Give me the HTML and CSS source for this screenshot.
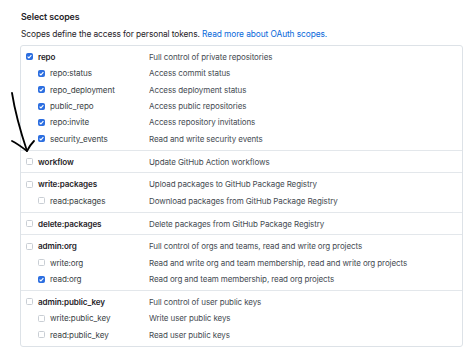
FILE: index.html
```html
<!DOCTYPE html>
<html lang="en">
<head>
    <meta charset="UTF-8">
    <meta name="viewport" content="width=device-width, initial-scale=1.0">
    <title>Select scopes</title>
    <link rel="stylesheet" href="styles.css">
</head>
<body>
    <div class="page">
        <h3 class="title">Select scopes</h3>
        <p class="hint">Scopes define the access for personal tokens. <a href="#">Read more about OAuth scopes.</a></p>
        <div class="scopes">
            <div class="group">
                <div class="row"><span class="box checked"></span><span class="name main">repo</span><span class="desc">Full control of private repositories</span></div>
                <div class="row sub"><span class="box checked"></span><span class="name">repo:status</span><span class="desc">Access commit status</span></div>
                <div class="row sub"><span class="box checked"></span><span class="name">repo_deployment</span><span class="desc">Access deployment status</span></div>
                <div class="row sub"><span class="box checked"></span><span class="name">public_repo</span><span class="desc">Access public repositories</span></div>
                <div class="row sub"><span class="box checked"></span><span class="name">repo:invite</span><span class="desc">Access repository invitations</span></div>
                <div class="row sub"><span class="box checked"></span><span class="name">security_events</span><span class="desc">Read and write security events</span></div>
            </div>
            <div class="group">
                <div class="row"><span class="box"></span><span class="name main">workflow</span><span class="desc">Update GitHub Action workflows</span></div>
            </div>
            <div class="group">
                <div class="row"><span class="box"></span><span class="name main">write:packages</span><span class="desc">Upload packages to GitHub Package Registry</span></div>
                <div class="row sub"><span class="box"></span><span class="name">read:packages</span><span class="desc">Download packages from GitHub Package Registry</span></div>
            </div>
            <div class="group">
                <div class="row"><span class="box"></span><span class="name main">delete:packages</span><span class="desc">Delete packages from GitHub Package Registry</span></div>
            </div>
            <div class="group">
                <div class="row"><span class="box"></span><span class="name main">admin:org</span><span class="desc">Full control of orgs and teams, read and write org projects</span></div>
                <div class="row sub"><span class="box"></span><span class="name">write:org</span><span class="desc">Read and write org and team membership, read and write org projects</span></div>
                <div class="row sub"><span class="box checked"></span><span class="name">read:org</span><span class="desc">Read org and team membership, read org projects</span></div>
            </div>
            <div class="group">
                <div class="row"><span class="box"></span><span class="name main">admin:public_key</span><span class="desc">Full control of user public keys</span></div>
                <div class="row sub"><span class="box"></span><span class="name">write:public_key</span><span class="desc">Write user public keys</span></div>
                <div class="row sub"><span class="box"></span><span class="name">read:public_key</span><span class="desc">Read user public keys</span></div>
            </div>
        </div>
        <svg class="arrow" width="474" height="349" viewBox="0 0 474 349">
            <path d="M12 93 C15 112 21 133 27 151" fill="none" stroke="#000" stroke-width="1.8" stroke-linecap="round"/>
            <path d="M12 141 C18 144 23 148 27 151 C29 147 31 144 34 141" fill="none" stroke="#000" stroke-width="1.8" stroke-linecap="round" stroke-linejoin="round"/>
        </svg>
    </div>
</body>
</html>
```
FILE: styles.css
```css
body {
    margin: 0;
    padding: 0;
    background-color: white;
    font-family: 'Inter', 'Liberation Sans', sans-serif;
    color: #1f2328;
}
.page {
    position: relative;
    width: 474px;
    height: 349px;
    padding: 11px 0 0 21px;
    box-sizing: border-box;
}
.title {
    margin: 0;
    font-size: 8.8px;
    font-weight: 600;
    line-height: 12px;
    letter-spacing: -0.1px;
}
.hint {
    margin: 5px 0 0;
    font-size: 8.4px;
    line-height: 12px;
    letter-spacing: -0.1px;
    color: #1f2328;
}
.hint a {
    color: #0969da;
    text-decoration: none;
}
.scopes {
    margin: 5px 0 0 -1px;
    width: 441px;
    border: 1px solid #dde2e7;
    border-radius: 3px;
}
.group {
    padding: 2.7px 0;
    border-top: 1px solid #e3e7eb;
}
.group:first-child {
    border-top: none;
}
.row {
    display: flex;
    align-items: center;
    height: 16.4px;
    padding-left: 5px;
    font-size: 8.1px;
    letter-spacing: -0.1px;
}
.box {
    width: 7px;
    height: 7px;
    border: 1px solid #c9ced4;
    border-radius: 1.5px;
    box-sizing: border-box;
    margin-right: 5px;
    flex: none;
    background: white;
}
.box.checked {
    border-color: #2c6ee0;
    background: #2c6ee0 url("data:image/svg+xml,%3Csvg xmlns='http://www.w3.org/2000/svg' viewBox='0 0 7 7'%3E%3Cpath d='M1.6 3.6 L2.9 4.9 L5.4 2.1' fill='none' stroke='white' stroke-width='1.1'/%3E%3C/svg%3E") center / 7px 7px no-repeat;
}
.sub .box {
    margin-left: 12px;
}
.name {
    width: 111px;
    flex: none;
    color: #3a3f45;
}
.sub .name {
    width: 99px;
}
.name.main {
    font-weight: 600;
    color: #1f2328;
}
.desc {
    font-size: 8px;
    color: #454b52;
}
.arrow {
    position: absolute;
    left: 0;
    top: 0;
}
```
